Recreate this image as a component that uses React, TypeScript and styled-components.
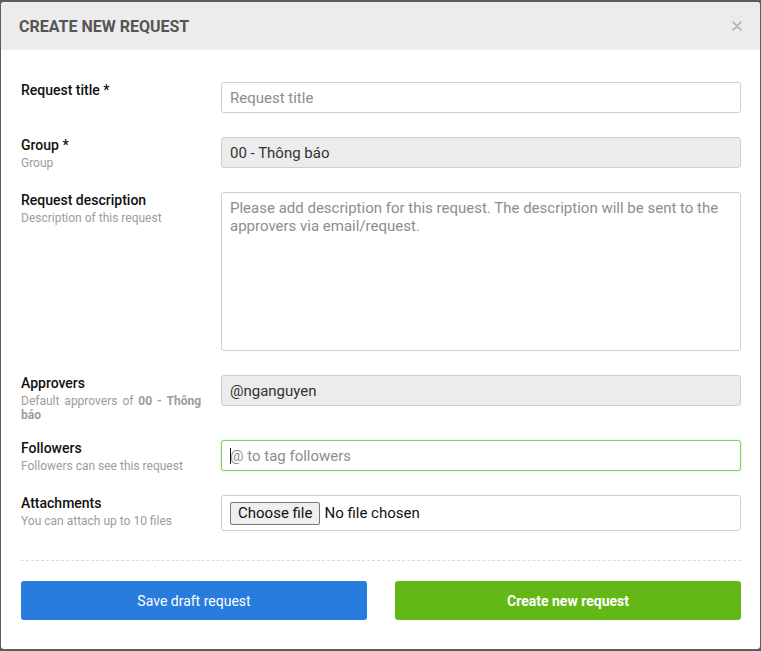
import { FC, ReactNode } from "react";
import styled, { createGlobalStyle } from "styled-components";

const GlobalStyle = createGlobalStyle`
  html, body {
    margin: 0;
    padding: 0;
    height: 100%;
    background: #5c5c5c;
    font-family: Roboto, "Liberation Sans", Arial, sans-serif;
  }
  * {
    box-sizing: border-box;
  }
`;

type Field = {
  title: string;
  hint?: ReactNode;
  control: ReactNode;
};

const CloseIcon: FC = () => (
  <svg width="10" height="10" viewBox="0 0 10 10">
    <path d="M1 1 L9 9 M9 1 L1 9" stroke="#adadad" strokeWidth="1.6" strokeLinecap="round" />
  </svg>
);

const FormRow: FC<Field> = ({ title, hint, control }) => (
  <Row>
    <LabelBlock>
      <LabelTitle>{title}</LabelTitle>
      {hint && <LabelHint>{hint}</LabelHint>}
    </LabelBlock>
    <div>{control}</div>
  </Row>
);

const FilePicker: FC = () => (
  <FileBox>
    <ChooseButton>
      Choose file
      <HiddenFile type="file" />
    </ChooseButton>
    <FileStatus>No file chosen</FileStatus>
  </FileBox>
);

export default function App() {
  return (
    <>
      <GlobalStyle />
      <Modal>
        <Header>
          <Title>CREATE NEW REQUEST</Title>
          <CloseButton aria-label="Close">
            <CloseIcon />
          </CloseButton>
        </Header>
        <Body>
          <FormRow
            title="Request title *"
            control={<TextInput placeholder="Request title" />}
          />
          <FormRow
            title="Group *"
            hint="Group"
            control={<TextInput $disabled readOnly value="00 - Thông báo" />}
          />
          <FormRow
            title="Request description"
            hint="Description of this request"
            control={
              <TextArea placeholder="Please add description for this request. The description will be sent to the approvers via email/request." />
            }
          />
          <FormRow
            title="Approvers"
            hint={
              <>
                Default approvers of <b>00 - Thông báo</b>
              </>
            }
            control={<TextInput $disabled readOnly value="@nganguyen" />}
          />
          <FormRow
            title="Followers"
            hint="Followers can see this request"
            control={
              <FocusWrap>
                <TextInput $focused placeholder="@ to tag followers" />
                <Caret />
              </FocusWrap>
            }
          />
          <FormRow
            title="Attachments"
            hint="You can attach up to 10 files"
            control={<FilePicker />}
          />
          <Footer>
            <ActionButton $color="#277cdd">Save draft request</ActionButton>
            <ActionButton $color="#64b816" $bold>
              Create new request
            </ActionButton>
          </Footer>
        </Body>
      </Modal>
    </>
  );
}

const Modal = styled.div`
  margin: 2px 1px 0 1px;
  height: 647px;
  background: #fff;
  border-radius: 3px;
  overflow: hidden;
  display: flex;
  flex-direction: column;
`;

const Header = styled.div`
  height: 48px;
  flex-shrink: 0;
  background: #ececec;
  display: flex;
  align-items: center;
  justify-content: space-between;
  padding: 0 18px 0 18px;
`;

const Title = styled.h4`
  margin: 0;
  font-size: 16px;
  font-weight: 700;
  color: #555;
  padding-top: 1px;
`;

const CloseButton = styled.button`
  border: none;
  background: none;
  padding: 0;
  width: 10px;
  height: 10px;
  display: flex;
  cursor: pointer;
  margin-top: -1px;
`;

const Body = styled.div`
  padding: 32px 19px 29px 20px;
  display: flex;
  flex-direction: column;
  flex: 1;
`;

const Row = styled.div`
  display: grid;
  grid-template-columns: 180px 1fr;
  column-gap: 20px;
  align-items: start;
  margin-bottom: 24px;
`;

const LabelBlock = styled.div`
  display: flex;
  flex-direction: column;
  margin-bottom: -6px;
`;

const LabelTitle = styled.div`
  font-size: 14px;
  line-height: 17px;
  font-weight: 500;
  color: #111;
`;

const LabelHint = styled.div`
  font-size: 12px;
  line-height: 14px;
  color: #9c9c9c;
  text-align: justify;
  margin-top: 2px;

  b {
    font-weight: 700;
  }
`;

const TextInput = styled.input<{ $disabled?: boolean; $focused?: boolean }>`
  display: block;
  width: 100%;
  height: 31px;
  padding: 0 8px;
  font-family: Roboto, "Liberation Sans", Arial, sans-serif;
  font-size: 15px;
  line-height: 18px;
  color: #333;
  background: ${(p) => (p.$disabled ? "#ececec" : "#fff")};
  border: 1px solid ${(p) => (p.$focused ? "#7fd15e" : "#cfcfcf")};
  border-radius: 3px;
  outline: none;
  box-shadow: ${(p) => (p.$focused ? "0 0 2px rgba(110, 200, 80, 0.45)" : "none")};

  &::placeholder {
    color: #8d8d8d;
  }
`;

const FocusWrap = styled.div`
  position: relative;
`;

const Caret = styled.span`
  position: absolute;
  left: 9px;
  top: 8px;
  width: 1px;
  height: 16px;
  background: #111;
`;

const TextArea = styled.textarea`
  display: block;
  width: 100%;
  height: 159px;
  padding: 6px 8px;
  font-family: Roboto, "Liberation Sans", Arial, sans-serif;
  font-size: 15px;
  line-height: 18px;
  color: #333;
  border: 1px solid #cfcfcf;
  border-radius: 3px;
  resize: none;
  outline: none;

  &::placeholder {
    color: #8d8d8d;
  }
`;

const FileBox = styled.div`
  height: 36px;
  display: flex;
  align-items: center;
  gap: 4px;
  padding: 0 8px;
  border: 1px solid #cfcfcf;
  border-radius: 3px;
  background: #fff;
  font-size: 15px;
  color: #111;
`;

const ChooseButton = styled.label`
  position: relative;
  height: 23px;
  padding: 0 7px;
  display: flex;
  align-items: center;
  border: 1px solid #767676;
  border-radius: 2px;
  background: #efefef;
  color: #111;
  cursor: pointer;
`;

const HiddenFile = styled.input`
  display: none;
`;

const FileStatus = styled.span`
  color: #111;
`;

const Footer = styled.div`
  margin-top: 5px;
  border-top: 1px dashed #dcdcdc;
  padding-top: 20px;
  display: grid;
  grid-template-columns: 1fr 1fr;
  column-gap: 28px;
`;

const ActionButton = styled.button<{ $color: string; $bold?: boolean }>`
  height: 39px;
  border: none;
  border-radius: 3px;
  background: ${(p) => p.$color};
  color: #fff;
  font-family: Roboto, "Liberation Sans", Arial, sans-serif;
  font-size: 14px;
  font-weight: ${(p) => (p.$bold ? 700 : 400)};
  cursor: pointer;
`;
